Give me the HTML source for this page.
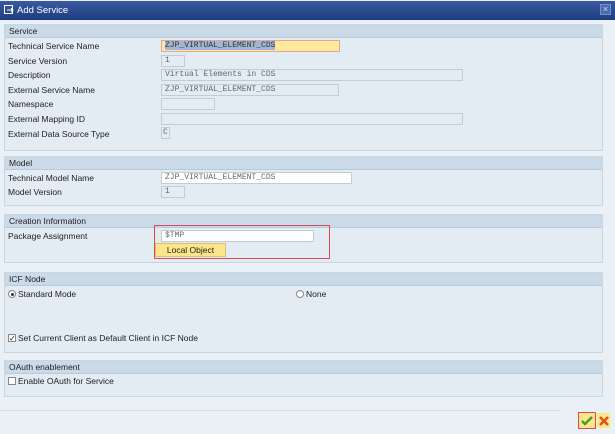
<!DOCTYPE html>
<html><head><meta charset="utf-8"><style>
*{box-sizing:border-box;margin:0;padding:0}
body{width:615px;height:434px;background:#e9f0f6;font-family:"Liberation Sans",sans-serif;font-size:8.5px;color:#222;position:relative;overflow:hidden}
.abs{position:absolute}
.title{left:0;top:1px;width:615px;height:19px;background:linear-gradient(#3a5aa0,#1e3d80);color:#fff;font-size:9.5px;line-height:19px;padding-left:17px}
.grp{position:absolute;left:4px;width:599px;background:#e3ebf3;border:1px solid #c9d6e2}
.hd{height:13px;background:#cbdae8;border-bottom:1px solid #b8c9da;padding-left:4px;line-height:13px;font-size:8.5px}
.lbl{position:absolute;left:8px;font-size:8.5px;line-height:10px}
.inp{position:absolute;height:12px;border:1px solid #c2ccd6;background:#e3ebf3;font-family:"Liberation Mono",monospace;font-size:8px;color:#666;line-height:10px;padding-left:3px;white-space:nowrap}
.w{background:#fff}
</style></head><body>
<div class="abs title">Add Service</div>
<svg class="abs" style="left:4px;top:5px" width="10" height="10"><rect x="0.5" y="0.5" width="8" height="8" fill="none" stroke="#fff"/><path d="M3 5h6M7 3l2 2-2 2" stroke="#fff" fill="none"/></svg>
<div class="abs" style="left:600px;top:4px;width:11px;height:11px;background:#4a6bb0;border:1px solid #7790c8;color:#dde;font-size:9px;line-height:9px;text-align:center">×</div>

<div class="grp" style="top:24px;height:127px"><div class="hd">Service</div></div>
<div class="lbl" style="top:41px">Technical Service Name</div>
<div class="lbl" style="top:56px">Service Version</div>
<div class="lbl" style="top:70px">Description</div>
<div class="lbl" style="top:85px">External Service Name</div>
<div class="lbl" style="top:99px">Namespace</div>
<div class="lbl" style="top:114px">External Mapping ID</div>
<div class="lbl" style="top:129px">External Data Source Type</div>
<div class="inp" style="left:161px;top:40px;width:179px;background:#fde99a;border-color:#e7a3a3;color:#333"><span style="background:#9fb7d0">ZJP_VIRTUAL_ELEMENT_CDS</span></div>
<div class="inp" style="left:161px;top:55px;width:24px">1</div>
<div class="inp" style="left:161px;top:69px;width:302px">Virtual Elements in CDS</div>
<div class="inp" style="left:161px;top:84px;width:178px">ZJP_VIRTUAL_ELEMENT_CDS</div>
<div class="inp" style="left:161px;top:98px;width:54px"></div>
<div class="inp" style="left:161px;top:113px;width:302px"></div>
<div class="inp" style="left:161px;top:127px;width:9px;padding-left:1px">C</div>

<div class="grp" style="top:156px;height:50px"><div class="hd">Model</div></div>
<div class="lbl" style="top:173px">Technical Model Name</div>
<div class="lbl" style="top:187px">Model Version</div>
<div class="inp w" style="left:161px;top:172px;width:191px">ZJP_VIRTUAL_ELEMENT_CDS</div>
<div class="inp" style="left:161px;top:186px;width:24px">1</div>

<div class="grp" style="top:214px;height:49px"><div class="hd">Creation Information</div></div>
<div class="lbl" style="top:231px">Package Assignment</div>
<div class="inp w" style="left:161px;top:230px;width:153px">$TMP</div>
<div class="abs" style="left:155px;top:243px;width:71px;height:14px;background:#fde68a;border:1px solid #d8c070;font-size:8.5px;line-height:12px;text-align:center">Local Object</div>
<div class="abs" style="left:154px;top:225px;width:176px;height:34px;border:1px solid #d94a55"></div>

<div class="grp" style="top:272px;height:81px"><div class="hd">ICF Node</div></div>
<div class="abs" style="left:8px;top:290px;width:8px;height:8px;border:1px solid #888;border-radius:50%;background:#fff"><div style="margin:1.5px;width:3px;height:3px;border-radius:50%;background:#333"></div></div>
<div class="lbl" style="left:18px;top:289px">Standard Mode</div>
<div class="abs" style="left:296px;top:290px;width:8px;height:8px;border:1px solid #888;border-radius:50%;background:#fff"></div>
<div class="lbl" style="left:306px;top:289px">None</div>
<div class="abs" style="left:8px;top:334px;width:8px;height:8px;border:1px solid #888;background:#fff;font-size:8px;line-height:7px;text-align:center">✓</div>
<div class="lbl" style="left:18px;top:333px">Set Current Client as Default Client in ICF Node</div>

<div class="grp" style="top:360px;height:37px"><div class="hd">OAuth enablement</div></div>
<div class="abs" style="left:8px;top:377px;width:8px;height:8px;border:1px solid #888;background:#fff"></div>
<div class="lbl" style="left:18px;top:376px">Enable OAuth for Service</div>

<div class="abs" style="left:0;top:410px;width:560px;height:1px;background:#d4dde6"></div>
<div class="abs" style="left:578px;top:412px;width:18px;height:17px;border:1px solid #d94a55;background:#fde68a"></div>
<svg class="abs" style="left:581px;top:415px" width="12" height="11"><path d="M1 6l3 3 7-7" stroke="#4a9a2a" stroke-width="2.5" fill="none"/></svg>
<div class="abs" style="left:597px;top:413px;width:13px;height:15px;background:#fde68a"></div>
<svg class="abs" style="left:599px;top:416px" width="10" height="10"><path d="M1 1l8 8M9 1l-8 8" stroke="#d9541e" stroke-width="2.5"/></svg>
</body></html>
